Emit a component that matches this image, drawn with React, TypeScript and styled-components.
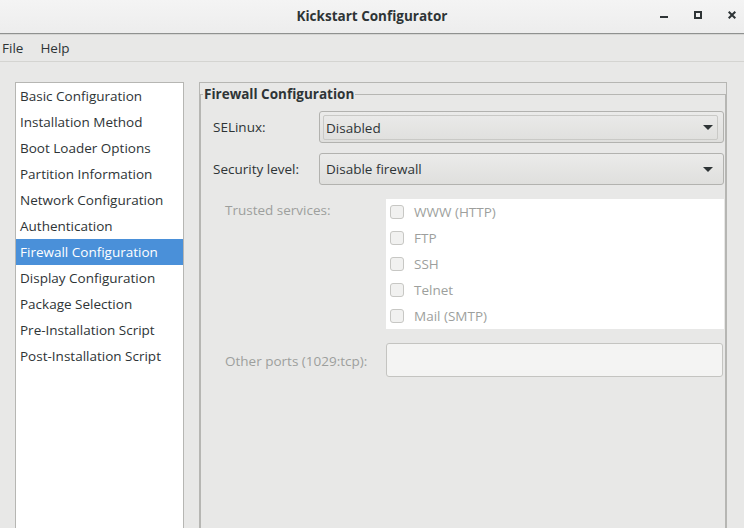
import React from "react";
import styled, { createGlobalStyle } from "styled-components";

const GlobalStyle = createGlobalStyle`
  html, body {
    margin: 0;
    padding: 0;
    height: 100%;
    overflow: hidden;
  }
  body {
    background: #e8e8e7;
    font-family: "Open Sans", "Noto Sans", sans-serif;
    font-size: 13px;
    color: #2e3436;
  }
`;

const Window = styled.div`
  width: 744px;
  height: 528px;
  display: flex;
  flex-direction: column;
  overflow: hidden;
`;

const TitleBar = styled.div`
  height: 33px;
  flex: none;
  display: flex;
  align-items: center;
  justify-content: center;
  position: relative;
  background: linear-gradient(#f4f4f4, #ededed);
  border-bottom: 1px solid #8f9190;
  box-shadow: 0 1px 0 #d6d6d4;
`;

const Title = styled.div`
  font-weight: 700;
  font-size: 13.5px;
  color: #2e3436;
  margin-top: -2px;
`;

const Controls = styled.div`
  position: absolute;
  right: 8px;
  top: 11px;
  display: flex;
  gap: 26px;
`;

const MenuBar = styled.div`
  height: 27px;
  flex: none;
  display: flex;
  align-items: center;
  gap: 17px;
  padding-left: 2px;
  border-bottom: 1px solid #d4d4d1;
`;

const MenuItem = styled.span`
  font-size: 13.5px;
`;

const Main = styled.div`
  flex: 1;
  display: flex;
  gap: 15px;
  padding: 20px 0 0 15px;
  min-height: 0;
`;

const Sidebar = styled.div`
  width: 167px;
  flex: none;
  background: #fff;
  border: 1px solid #b6b6b3;
  border-bottom: none;
`;

const NavItem = styled.div<{ $active?: boolean }>`
  height: 26px;
  line-height: 26px;
  padding-left: 4px;
  font-size: 13.5px;
  white-space: nowrap;
  background: ${(p) => (p.$active ? "#4a90d9" : "transparent")};
  color: ${(p) => (p.$active ? "#ffffff" : "#2e3436")};
`;

const Page = styled.div`
  width: 526px;
  flex: none;
  border: 1px solid #b6b6b3;
  border-bottom: none;
  padding-top: 2px;
`;

const Frame = styled.fieldset`
  margin: 0;
  padding: 0;
  border: 1px solid #b6b6b3;
  border-bottom: none;
  height: 470px;
  min-width: 0;
`;

const Legend = styled.legend`
  font-weight: 700;
  font-size: 13.5px;
  padding: 0 1px;
  margin-left: 2px;
  color: #2e3436;
`;

const TopGrid = styled.div`
  display: grid;
  grid-template-columns: 106px 1fr;
  row-gap: 10px;
  align-items: center;
  padding: 8px 1px 0 12px;
`;

const Label = styled.span<{ $dim?: boolean }>`
  font-size: 13.5px;
  color: ${(p) => (p.$dim ? "#9d9f9d" : "#2e3436")};
`;

const Combo = styled.div<{ $inset?: boolean }>`
  height: 32px;
  box-sizing: border-box;
  border: 1px solid #b2b2af;
  border-radius: 3px;
  background: linear-gradient(#ebebea, #dfdfdd);
  display: flex;
  align-items: center;
  padding: ${(p) => (p.$inset ? "3px 5px 2px 3px" : "0 10px 0 6px")};
`;

const ComboInner = styled.div`
  flex: 1;
  height: 100%;
  box-sizing: border-box;
  border: 1px solid #c9c9c6;
  border-radius: 2px;
  display: flex;
  align-items: center;
  justify-content: space-between;
  padding: 0 4px 0 2px;
`;

const ComboRow = styled.div`
  flex: 1;
  display: flex;
  align-items: center;
  justify-content: space-between;
`;

const Arrow = styled.span`
  width: 0;
  height: 0;
  border-left: 5px solid transparent;
  border-right: 5px solid transparent;
  border-top: 5px solid #2e3436;
`;

const LowerGrid = styled.div`
  display: grid;
  grid-template-columns: 161px 1fr;
  row-gap: 14px;
  padding: 14px 1px 0 24px;
`;

const TopLabel = styled(Label)`
  padding-top: 2px;
`;

const ServiceList = styled.div`
  background: #fff;
  height: 130px;
`;

const Service = styled.div`
  height: 26px;
  display: flex;
  align-items: center;
  gap: 10px;
  padding-left: 4px;
`;

const CheckBox = styled.span`
  width: 14px;
  height: 14px;
  box-sizing: border-box;
  border: 1px solid #c7c7c4;
  border-radius: 3px;
  background: #f1f1f0;
`;

const PortLabel = styled(Label)`
  align-self: center;
  padding-top: 1px;
`;

const Entry = styled.div`
  height: 34px;
  box-sizing: border-box;
  margin-right: 1px;
  border: 1px solid #c4c4c1;
  border-radius: 3px;
  background: #f4f4f3;
`;

const Glyph = styled.svg`
  display: block;
`;

const navItems = [
  "Basic Configuration",
  "Installation Method",
  "Boot Loader Options",
  "Partition Information",
  "Network Configuration",
  "Authentication",
  "Firewall Configuration",
  "Display Configuration",
  "Package Selection",
  "Pre-Installation Script",
  "Post-Installation Script",
];

const services = ["WWW (HTTP)", "FTP", "SSH", "Telnet", "Mail (SMTP)"];

export default function App() {
  return (
    <Window>
      <GlobalStyle />
      <TitleBar>
        <Title>Kickstart Configurator</Title>
        <Controls>
          <Glyph width="8" height="8" viewBox="0 0 8 8">
            <rect x="0" y="5" width="8" height="2" fill="#2e3436" />
          </Glyph>
          <Glyph width="8" height="8" viewBox="0 0 8 8">
            <rect x="1" y="1" width="6" height="6" fill="none" stroke="#2e3436" strokeWidth="2" />
          </Glyph>
          <Glyph width="8" height="8" viewBox="0 0 8 8">
            <path d="M0.7 0.7 L7.3 7.3 M7.3 0.7 L0.7 7.3" stroke="#2e3436" strokeWidth="2" />
          </Glyph>
        </Controls>
      </TitleBar>
      <MenuBar>
        <MenuItem>File</MenuItem>
        <MenuItem>Help</MenuItem>
      </MenuBar>
      <Main>
        <Sidebar>
          {navItems.map((item) => (
            <NavItem key={item} $active={item === "Firewall Configuration"}>
              {item}
            </NavItem>
          ))}
        </Sidebar>
        <Page>
          <Frame>
            <Legend>Firewall Configuration</Legend>
            <TopGrid>
              <Label>SELinux:</Label>
              <Combo $inset>
                <ComboInner>
                  <Label>Disabled</Label>
                  <Arrow />
                </ComboInner>
              </Combo>
              <Label>Security level:</Label>
              <Combo>
                <ComboRow>
                  <Label>Disable firewall</Label>
                  <Arrow />
                </ComboRow>
              </Combo>
            </TopGrid>
            <LowerGrid>
              <TopLabel $dim>Trusted services:</TopLabel>
              <ServiceList>
                {services.map((s) => (
                  <Service key={s}>
                    <CheckBox />
                    <Label $dim>{s}</Label>
                  </Service>
                ))}
              </ServiceList>
              <PortLabel $dim>Other ports (1029:tcp):</PortLabel>
              <Entry />
            </LowerGrid>
          </Frame>
        </Page>
      </Main>
    </Window>
  );
}
